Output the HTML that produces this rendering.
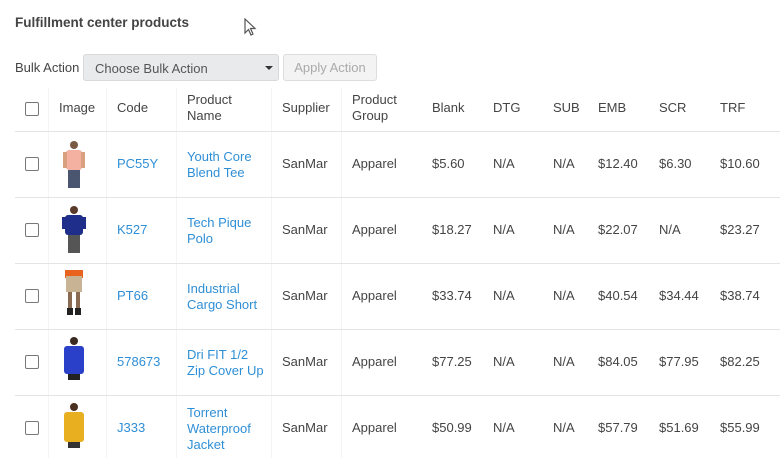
<!DOCTYPE html>
<html><head><style>
body{margin:0;width:780px;height:458px;overflow:hidden;background:#fff;font-family:"Liberation Sans",sans-serif;color:#444;font-size:13px;position:relative}
.a{position:absolute}
h1{position:absolute;left:15px;top:15px;margin:0;font-size:13.5px;font-weight:bold;color:#444}
.sel{left:83px;top:54px;width:196px;height:27px;background:#e9eaec;border:1px solid #d8d9db;border-radius:3px;box-sizing:border-box;line-height:27px;padding-left:11px;color:#555}
.btn{left:283px;top:54px;width:94px;height:27px;border:1px solid #ddd;background:#f3f3f3;border-radius:3px;box-sizing:border-box;line-height:25px;text-align:center;color:#aaa}
.cb{width:12px;height:12px;border:1.5px solid #777;border-radius:2px;position:absolute;left:25px}
.hl{position:absolute;left:15px;width:765px;height:1px;background:#e2e4e8}
.vl{position:absolute;top:88px;width:1px;height:370px;background:#f3f4f6}
.t{position:absolute;line-height:16px}
.lk{color:#2f8fd6}
</style></head><body>
<h1>Fulfillment center products</h1>
<svg class="a" style="left:244px;top:18px" width="14" height="20" viewBox="0 0 14 20"><path d="M1 1 L1 15 L4.5 11.5 L7 17 L9 16 L6.5 10.5 L11 10.5 Z" fill="#fff" stroke="#555" stroke-width="1.2"/></svg>
<div class="a" style="left:15px;top:60px">Bulk Action</div>
<div class="a sel">Choose Bulk Action</div>
<div class="a" style="left:265px;top:66px;width:0;height:0;border-left:4px solid transparent;border-right:4px solid transparent;border-top:4px solid #333"></div>
<div class="a btn">Apply Action</div>
<div class="vl" style="left:48px"></div><div class="vl" style="left:106px"></div><div class="vl" style="left:176px"></div><div class="vl" style="left:271px"></div><div class="vl" style="left:341px"></div>
<div class="hl" style="top:131px"></div><div class="hl" style="top:197px"></div><div class="hl" style="top:263px"></div><div class="hl" style="top:329px"></div><div class="hl" style="top:395px"></div>
<div class="cb" style="top:102px"></div>
<div class="t" style="left:59px;top:100px">Image</div>
<div class="t" style="left:117px;top:100px">Code</div>
<div class="t" style="left:187px;top:92px">Product<br>Name</div>
<div class="t" style="left:282px;top:100px">Supplier</div>
<div class="t" style="left:352px;top:92px">Product<br>Group</div>
<div class="t" style="left:432px;top:100px">Blank</div>
<div class="t" style="left:493px;top:100px">DTG</div>
<div class="t" style="left:553px;top:100px">SUB</div>
<div class="t" style="left:598px;top:100px">EMB</div>
<div class="t" style="left:659px;top:100px">SCR</div>
<div class="t" style="left:720px;top:100px">TRF</div>

<!-- rows -->
<div class="cb" style="top:157px"></div>
<svg class="a" style="left:62px;top:140px" width="24" height="50"><circle cx="12" cy="5" r="4" fill="#7a5a44"/><rect x="4" y="10" width="16" height="20" rx="3" fill="#f4b0a0"/><rect x="1" y="12" width="4" height="16" fill="#d9a080"/><rect x="19" y="12" width="4" height="16" fill="#d9a080"/><rect x="6" y="30" width="12" height="18" fill="#4a5670"/></svg>
<div class="t lk" style="left:117px;top:156px">PC55Y</div>
<div class="t lk" style="left:187px;top:149px">Youth Core<br>Blend Tee</div>
<div class="t" style="left:282px;top:156px">SanMar</div><div class="t" style="left:352px;top:156px">Apparel</div>
<div class="t" style="left:432px;top:156px">$5.60</div><div class="t" style="left:493px;top:156px">N/A</div><div class="t" style="left:553px;top:156px">N/A</div><div class="t" style="left:598px;top:156px">$12.40</div><div class="t" style="left:659px;top:156px">$6.30</div><div class="t" style="left:720px;top:156px">$10.60</div>

<div class="cb" style="top:223px"></div>
<svg class="a" style="left:62px;top:205px" width="24" height="50"><circle cx="12" cy="5" r="4" fill="#5a3a2a"/><rect x="3" y="10" width="18" height="20" rx="3" fill="#1e2e8a"/><rect x="0" y="12" width="4" height="12" fill="#1e2e8a"/><rect x="20" y="12" width="4" height="12" fill="#1e2e8a"/><rect x="6" y="30" width="12" height="18" fill="#555"/></svg>
<div class="t lk" style="left:117px;top:222px">K527</div>
<div class="t lk" style="left:187px;top:215px">Tech Pique<br>Polo</div>
<div class="t" style="left:282px;top:222px">SanMar</div><div class="t" style="left:352px;top:222px">Apparel</div>
<div class="t" style="left:432px;top:222px">$18.27</div><div class="t" style="left:493px;top:222px">N/A</div><div class="t" style="left:553px;top:222px">N/A</div><div class="t" style="left:598px;top:222px">$22.07</div><div class="t" style="left:659px;top:222px">N/A</div><div class="t" style="left:720px;top:222px">$23.27</div>

<div class="cb" style="top:289px"></div>
<svg class="a" style="left:62px;top:270px" width="24" height="50"><rect x="3" y="0" width="18" height="8" fill="#e8641e"/><rect x="4" y="6" width="16" height="16" fill="#c8b494"/><rect x="6" y="22" width="4" height="16" fill="#8a6a50"/><rect x="14" y="22" width="4" height="16" fill="#8a6a50"/><rect x="5" y="38" width="6" height="7" fill="#222"/><rect x="13" y="38" width="6" height="7" fill="#222"/></svg>
<div class="t lk" style="left:117px;top:288px">PT66</div>
<div class="t lk" style="left:187px;top:281px">Industrial<br>Cargo Short</div>
<div class="t" style="left:282px;top:288px">SanMar</div><div class="t" style="left:352px;top:288px">Apparel</div>
<div class="t" style="left:432px;top:288px">$33.74</div><div class="t" style="left:493px;top:288px">N/A</div><div class="t" style="left:553px;top:288px">N/A</div><div class="t" style="left:598px;top:288px">$40.54</div><div class="t" style="left:659px;top:288px">$34.44</div><div class="t" style="left:720px;top:288px">$38.74</div>

<div class="cb" style="top:355px"></div>
<svg class="a" style="left:62px;top:336px" width="24" height="50"><circle cx="12" cy="5" r="4" fill="#3a2a20"/><rect x="2" y="10" width="20" height="28" rx="3" fill="#2a40c8"/><rect x="6" y="38" width="12" height="6" fill="#222"/></svg>
<div class="t lk" style="left:117px;top:354px">578673</div>
<div class="t lk" style="left:187px;top:347px">Dri FIT 1/2<br>Zip Cover Up</div>
<div class="t" style="left:282px;top:354px">SanMar</div><div class="t" style="left:352px;top:354px">Apparel</div>
<div class="t" style="left:432px;top:354px">$77.25</div><div class="t" style="left:493px;top:354px">N/A</div><div class="t" style="left:553px;top:354px">N/A</div><div class="t" style="left:598px;top:354px">$84.05</div><div class="t" style="left:659px;top:354px">$77.95</div><div class="t" style="left:720px;top:354px">$82.25</div>

<div class="cb" style="top:421px"></div>
<svg class="a" style="left:62px;top:402px" width="24" height="50"><circle cx="12" cy="5" r="4" fill="#4a3020"/><rect x="2" y="10" width="20" height="30" rx="3" fill="#e8b020"/><rect x="6" y="40" width="12" height="6" fill="#333"/></svg>
<div class="t lk" style="left:117px;top:420px">J333</div>
<div class="t lk" style="left:187px;top:405px">Torrent<br>Waterproof<br>Jacket</div>
<div class="t" style="left:282px;top:420px">SanMar</div><div class="t" style="left:352px;top:420px">Apparel</div>
<div class="t" style="left:432px;top:420px">$50.99</div><div class="t" style="left:493px;top:420px">N/A</div><div class="t" style="left:553px;top:420px">N/A</div><div class="t" style="left:598px;top:420px">$57.79</div><div class="t" style="left:659px;top:420px">$51.69</div><div class="t" style="left:720px;top:420px">$55.99</div>
</body></html>
